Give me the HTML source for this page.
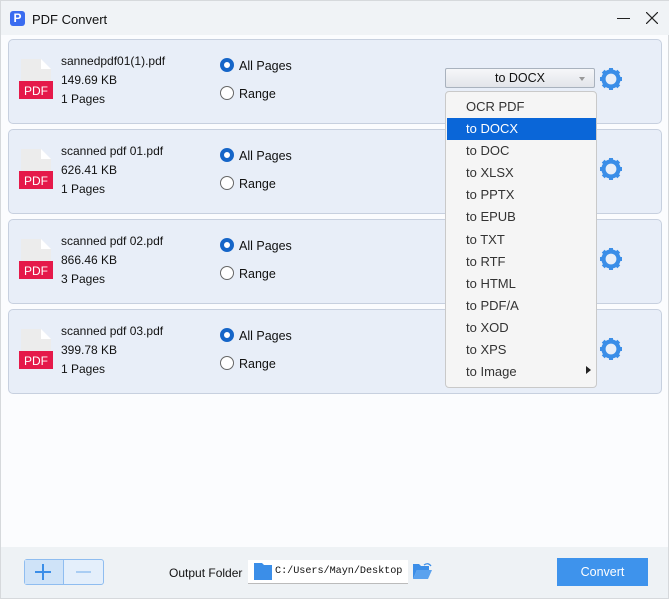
<!DOCTYPE html>
<html><head><meta charset="utf-8"><style>
*{margin:0;padding:0;box-sizing:border-box}
body{width:670px;height:600px;overflow:hidden;font-family:"Liberation Sans",Arial,sans-serif;font-size:12px;color:#111;background:#fff;position:relative}
.win{position:absolute;left:0;top:0;width:669px;height:599px;border:1px solid #d6d9dc;background:#fbfcfe}
.title{position:absolute;left:0;top:0;width:668px;height:34px;background:#f0f3f6}
.logo{position:absolute;left:9px;top:10px;width:15px;height:15px;border-radius:3px;background:#3a6cf0;color:#fff;font-weight:bold;font-size:12px;line-height:15px;text-align:center}
.ttext{position:absolute;left:31px;top:11px;font-size:13px}
.card{position:absolute;left:8px;width:654px;height:85px;background:#e8eef8;border:1px solid #c7d0df;border-radius:5px}
.doc{position:absolute;left:10px;top:17px;width:34px;height:42px}
.fn{position:absolute;left:52px;font-size:12px}
.radio{position:absolute;left:211px;width:14px;height:14px;border-radius:50%;border:1px solid #666;background:#fff}
.radio.on{border:4px solid #1565c8;background:#fff}
.rl{position:absolute;left:230px;font-size:12.5px}
.dd{position:absolute;left:445px;top:68px;width:150px;height:20px;border:1px solid #a9b2be;border-radius:2px;background:linear-gradient(#f6f7f9,#e2e5ea);text-align:center;line-height:18px;font-size:12.5px}
.dd:after{content:"";position:absolute;right:9px;top:8px;border:3px solid transparent;border-top:4px solid #999}
.menu{position:absolute;left:445px;top:91px;width:152px;height:297px;background:#f5f5f5;border:1px solid #c9c9c9;border-radius:4px}
.mi{position:absolute;left:1px;width:149px;height:22px;line-height:22px;padding-left:19px;font-size:13px;color:#333}
.mi.sel{background:#0a66d8;color:#fff}
.bottom{position:absolute;left:1px;top:547px;width:667px;height:51px;background:#eef2f5}
</style></head><body>
<div class="win">
<div class="title"><div class="logo">P</div><div class="ttext">PDF Convert</div>
<div style="position:absolute;left:616px;top:17px;width:13px;height:1px;background:#222"></div>
<svg style="position:absolute;left:645px;top:11px" width="12" height="12"><path d="M0 0L12 12M12 0L0 12" stroke="#222" stroke-width="1.2"/></svg>
</div>
</div>
<div class="card" style="top:39px"></div>
<div class="card" style="top:129px"></div>
<div class="card" style="top:219px"></div>
<div class="card" style="top:309px"></div>

<div style="position:absolute;left:9px;top:40px;width:654px;height:85px">
<svg class="doc" viewBox="0 0 34 42"><path d="M2 2H22L32 12V42H2Z" fill="#ececec"/><path d="M22 2V12H32Z" fill="#fff"/><rect x="0" y="24" width="36" height="18" fill="#e5194a"/><text x="17" y="38" font-size="12" fill="#fff" text-anchor="middle" font-family="Liberation Sans">PDF</text></svg>
<div class="fn" style="top:14px">sannedpdf01(1).pdf</div><div class="fn" style="top:33px">149.69 KB</div><div class="fn" style="top:52px">1 Pages</div>
<div class="radio on" style="top:18px"></div><div class="rl" style="top:19px">All Pages</div>
<div class="radio" style="top:46px"></div><div class="rl" style="top:47px">Range</div>
</div>
<div style="position:absolute;left:9px;top:130px;width:654px;height:85px">
<svg class="doc" viewBox="0 0 34 42"><path d="M2 2H22L32 12V42H2Z" fill="#ececec"/><path d="M22 2V12H32Z" fill="#fff"/><rect x="0" y="24" width="36" height="18" fill="#e5194a"/><text x="17" y="38" font-size="12" fill="#fff" text-anchor="middle" font-family="Liberation Sans">PDF</text></svg>
<div class="fn" style="top:14px">scanned pdf 01.pdf</div><div class="fn" style="top:33px">626.41 KB</div><div class="fn" style="top:52px">1 Pages</div>
<div class="radio on" style="top:18px"></div><div class="rl" style="top:19px">All Pages</div>
<div class="radio" style="top:46px"></div><div class="rl" style="top:47px">Range</div>
</div>
<div style="position:absolute;left:9px;top:220px;width:654px;height:85px">
<svg class="doc" viewBox="0 0 34 42"><path d="M2 2H22L32 12V42H2Z" fill="#ececec"/><path d="M22 2V12H32Z" fill="#fff"/><rect x="0" y="24" width="36" height="18" fill="#e5194a"/><text x="17" y="38" font-size="12" fill="#fff" text-anchor="middle" font-family="Liberation Sans">PDF</text></svg>
<div class="fn" style="top:14px">scanned pdf 02.pdf</div><div class="fn" style="top:33px">866.46 KB</div><div class="fn" style="top:52px">3 Pages</div>
<div class="radio on" style="top:18px"></div><div class="rl" style="top:19px">All Pages</div>
<div class="radio" style="top:46px"></div><div class="rl" style="top:47px">Range</div>
</div>
<div style="position:absolute;left:9px;top:310px;width:654px;height:85px">
<svg class="doc" viewBox="0 0 34 42"><path d="M2 2H22L32 12V42H2Z" fill="#ececec"/><path d="M22 2V12H32Z" fill="#fff"/><rect x="0" y="24" width="36" height="18" fill="#e5194a"/><text x="17" y="38" font-size="12" fill="#fff" text-anchor="middle" font-family="Liberation Sans">PDF</text></svg>
<div class="fn" style="top:14px">scanned pdf 03.pdf</div><div class="fn" style="top:33px">399.78 KB</div><div class="fn" style="top:52px">1 Pages</div>
<div class="radio on" style="top:18px"></div><div class="rl" style="top:19px">All Pages</div>
<div class="radio" style="top:46px"></div><div class="rl" style="top:47px">Range</div>
</div>

<svg width="0" height="0" style="position:absolute"><defs><g id="g"><circle cx="11" cy="11" r="7.5" fill="none" stroke="#3b8ee8" stroke-width="4.2"/><g stroke="#3b8ee8" stroke-width="4"><path d="M11 0V5M11 17V22M0 11H5M17 11H22M3.2 3.2L6.7 6.7M15.3 15.3L18.8 18.8M18.8 3.2L15.3 6.7M6.7 15.3L3.2 18.8"/></g></g></defs></svg>
<svg style="position:absolute;left:600px;top:68px" width="22" height="22"><use href="#g"/></svg>
<svg style="position:absolute;left:600px;top:158px" width="22" height="22"><use href="#g"/></svg>
<svg style="position:absolute;left:600px;top:248px" width="22" height="22"><use href="#g"/></svg>
<svg style="position:absolute;left:600px;top:338px" width="22" height="22"><use href="#g"/></svg>

<div class="dd">to DOCX</div>
<div class="menu">
<div class="mi" style="top:4px">OCR PDF</div>
<div class="mi sel" style="top:26px">to DOCX</div>
<div class="mi" style="top:48px">to DOC</div>
<div class="mi" style="top:70px">to XLSX</div>
<div class="mi" style="top:92px">to PPTX</div>
<div class="mi" style="top:114px">to EPUB</div>
<div class="mi" style="top:137px">to TXT</div>
<div class="mi" style="top:159px">to RTF</div>
<div class="mi" style="top:181px">to HTML</div>
<div class="mi" style="top:203px">to PDF/A</div>
<div class="mi" style="top:225px">to XOD</div>
<div class="mi" style="top:247px">to XPS</div>
<div class="mi" style="top:269px">to Image</div>
<div style="position:absolute;left:140px;top:274px;border:4px solid transparent;border-left:5px solid #222;border-right:0"></div>
</div>

<div class="bottom">
<div style="position:absolute;left:23px;top:12px;width:80px;height:26px;border:1px solid #8fbdf0;border-radius:3px;background:#e4effb"></div>
<div style="position:absolute;left:24px;top:13px;width:39px;height:24px;background:#cfe3f8;border-right:1px solid #8fbdf0"></div>
<div style="position:absolute;left:34px;top:24px;width:16px;height:2px;background:#3b8ee8"></div>
<div style="position:absolute;left:41px;top:17px;width:2px;height:16px;background:#3b8ee8"></div>
<div style="position:absolute;left:75px;top:24px;width:15px;height:2px;background:#a9cdf3"></div>
<div style="position:absolute;left:168px;top:19px;font-size:12px">Output Folder</div>
<div style="position:absolute;left:247px;top:13px;width:160px;height:24px;background:#fff;border-bottom:1px solid #bbb"></div>
<svg style="position:absolute;left:253px;top:16px" width="18" height="17"><path d="M0 0H8L10 2H18V17H0Z" fill="#3b8ee8"/></svg>
<div style="position:absolute;left:274px;top:19px;font-family:'Liberation Mono',monospace;font-size:10.2px;letter-spacing:-0.05px">C:/Users/Mayn/Desktop</div>
<svg style="position:absolute;left:411px;top:15px" width="20" height="18"><path d="M1 2H7L9 4H17V8H5L1 17Z" fill="#3b8ee8"/><path d="M5 8H20L16 17H1Z" fill="#5aa2ee"/><path d="M12 3Q16 0 19 4" stroke="#3b8ee8" fill="none" stroke-width="1.3"/></svg>
<div style="position:absolute;left:556px;top:11px;width:91px;height:28px;background:#3e93ec;color:#fff;text-align:center;line-height:28px;font-size:12.5px">Convert</div>
</div>
</body></html>
